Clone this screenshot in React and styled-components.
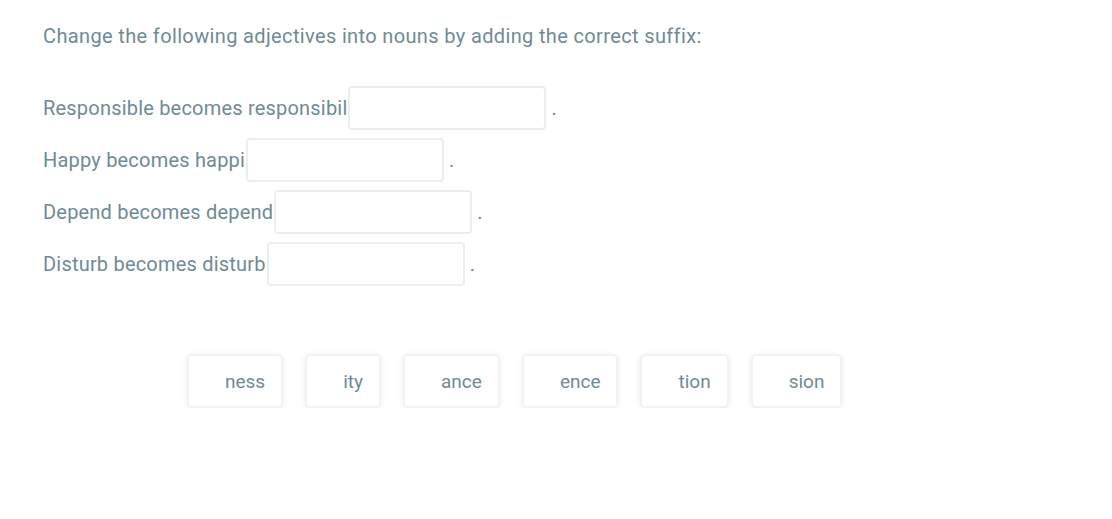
import styled, { createGlobalStyle } from "styled-components";

const GlobalStyle = createGlobalStyle`
  body {
    margin: 0;
    background: #fff;
    font-family: "Roboto", "Open Sans", sans-serif;
    font-variant-ligatures: none;
    color: #6f8a95;
  }
`;

const rows = [
  { word: "Responsible", stem: "responsibil" },
  { word: "Happy", stem: "happi" },
  { word: "Depend", stem: "depend" },
  { word: "Disturb", stem: "disturb" },
];

const suffixes = ["ness", "ity", "ance", "ence", "tion", "sion"];

export default function App() {
  return (
    <Page>
      <GlobalStyle />
      <Title>Change the following adjectives into nouns by adding the correct suffix:</Title>

      <Rows>
        {rows.map((r) => (
          <Row key={r.word}>
            <span>
              {r.word} becomes {r.stem}
            </span>
            <Blank type="text" />
            <span>.</span>
          </Row>
        ))}
      </Rows>

      <Chips>
        {suffixes.map((s) => (
          <Chip key={s}>{s}</Chip>
        ))}
      </Chips>
    </Page>
  );
}

const Page = styled.div`
  padding: 24px 43px 0 43px;
`;

const Title = styled.p`
  margin: 0;
  font-size: 20px;
  line-height: 24px;
  letter-spacing: 0.36px;
`;

const Rows = styled.div`
  display: flex;
  flex-direction: column;
  gap: 8px;
  margin-top: 38px;
`;

const Row = styled.div`
  display: flex;
  align-items: baseline;
  font-size: 20px;
  line-height: 44px;
  height: 44px;
  letter-spacing: 0.2px;
`;

const Blank = styled.input`
  box-sizing: border-box;
  width: 198px;
  height: 44px;
  margin: 0 5px 0 1px;
  border: 2px solid #ededed;
  border-radius: 4px;
  background: #fff;
  font: inherit;
  color: inherit;
  padding: 0 10px;
  outline: none;
`;

const Chips = styled.div`
  display: flex;
  gap: 22px;
  margin: 68px 0 0 144px;
`;

const Chip = styled.div`
  box-sizing: border-box;
  height: 54px;
  display: flex;
  align-items: center;
  padding: 0 16px 0 36px;
  border: 2px solid #f2f2f2;
  border-radius: 5px;
  background: #fff;
  box-shadow: 0 1px 6px rgba(0, 0, 0, 0.08);
  font-size: 19px;
  color: #6f8a95;
`;
